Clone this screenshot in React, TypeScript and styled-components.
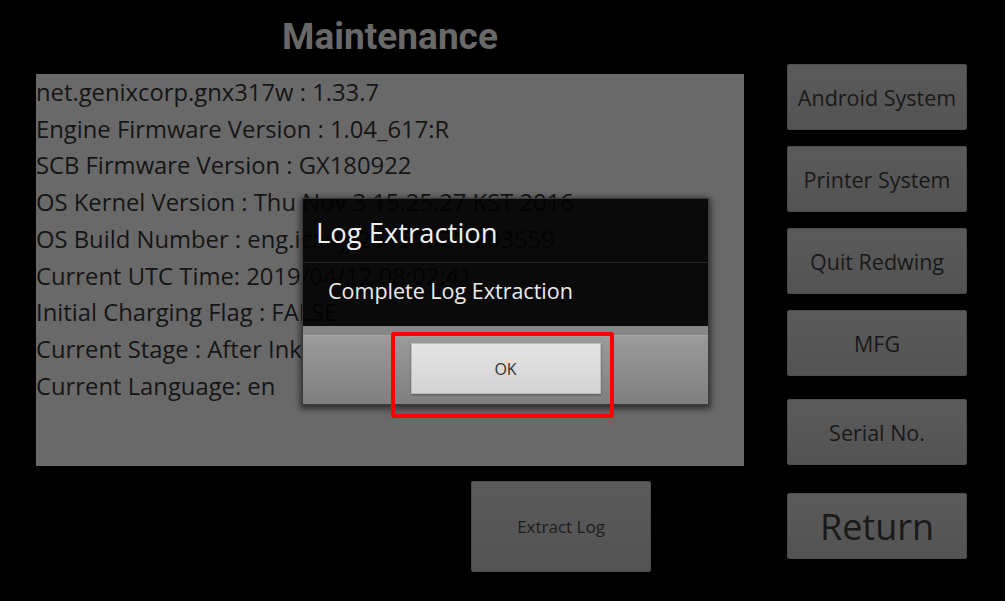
import styled, { createGlobalStyle } from "styled-components";

const GlobalStyle = createGlobalStyle`
  html, body {
    margin: 0;
    padding: 0;
    background: #000;
  }
  * {
    box-sizing: border-box;
  }
`;

const infoLines = [
  "net.genixcorp.gnx317w : 1.33.7",
  "Engine Firmware Version : 1.04_617:R",
  "SCB Firmware Version : GX180922",
  "OS Kernel Version : Thu Nov 3 15:25:27 KST 2016",
  "OS Build Number : eng.icanjj.20161021.203559",
  "Current UTC Time: 2019/04/12 08:02:41",
  "Initial Charging Flag : FALSE",
  "Current Stage : After Ink Charging",
  "Current Language: en",
];

const menuButtons = [
  { label: "Android System", gap: 0 },
  { label: "Printer System", gap: 16 },
  { label: "Quit Redwing", gap: 16 },
  { label: "MFG", gap: 16 },
  { label: "Serial No.", gap: 23 },
  { label: "Return", gap: 28, big: true },
];

export default function App() {
  return (
    <>
      <GlobalStyle />
      <Screen>
        <LeftColumn>
          <Title>Maintenance</Title>
          <InfoPanel>
            {infoLines.map((line) => (
              <InfoLine key={line}>{line}</InfoLine>
            ))}
          </InfoPanel>
          <ExtractButton>Extract Log</ExtractButton>
        </LeftColumn>
        <RightColumn>
          {menuButtons.map((b) => (
            <MenuButton key={b.label} $gap={b.gap} $big={b.big}>
              {b.label}
            </MenuButton>
          ))}
        </RightColumn>

        <Dialog>
          <DialogTitle>Log Extraction</DialogTitle>
          <DialogMessage>Complete Log Extraction</DialogMessage>
          <ButtonBar>
            <OkWrap>
              <OkButton>OK</OkButton>
              <Highlight />
            </OkWrap>
          </ButtonBar>
        </Dialog>
      </Screen>
    </>
  );
}

const Screen = styled.div`
  position: relative;
  width: 1005px;
  height: 601px;
  background: #000;
  display: flex;
  font-family: "Open Sans", Roboto, sans-serif;
  overflow: hidden;
`;

const LeftColumn = styled.div`
  width: 708px;
  margin-left: 36px;
  display: flex;
  flex-direction: column;
`;

const Title = styled.div`
  height: 74px;
  display: flex;
  align-items: center;
  justify-content: center;
  padding-bottom: 2px;
  font-family: Roboto, sans-serif;
  font-size: 37px;
  font-weight: 700;
  color: #696969;
`;

const InfoPanel = styled.div`
  height: 392px;
  background: #696969;
`;

const InfoLine = styled.div`
  font-size: 23.8px;
  line-height: 36.7px;
  color: #151515;
  white-space: nowrap;
`;

const ExtractButton = styled.div`
  width: 180px;
  height: 91px;
  margin-top: 15px;
  margin-left: 435px;
  background: linear-gradient(#5a5a5a, #535353);
  border: 1px solid #4c4c4c;
  border-radius: 2px;
  display: flex;
  align-items: center;
  justify-content: center;
  font-size: 17px;
  color: #1c1c1c;
`;

const RightColumn = styled.div`
  margin-left: 43px;
  padding-top: 64px;
  display: flex;
  flex-direction: column;
`;

const MenuButton = styled.div<{ $gap: number; $big?: boolean }>`
  width: 180px;
  height: 66px;
  margin-top: ${(p) => p.$gap}px;
  background: linear-gradient(#5a5a5a, #535353);
  border: 1px solid #4c4c4c;
  border-radius: 2px;
  display: flex;
  align-items: center;
  justify-content: center;
  font-size: ${(p) => (p.$big ? 36 : 21.5)}px;
  color: #191919;
`;

const Dialog = styled.div`
  position: absolute;
  left: 302px;
  top: 198px;
  width: 407px;
  height: 207px;
  display: flex;
  flex-direction: column;
  background: rgba(0, 0, 0, 0.9);
  border: 1px solid #3a3a3a;
  box-shadow: 0 2px 6px 2px rgba(0, 0, 0, 0.55);
`;

const DialogTitle = styled.div`
  height: 64px;
  padding-left: 13px;
  padding-top: 4px;
  display: flex;
  align-items: center;
  font-size: 27.4px;
  color: #f0f0f0;
  border-bottom: 1px solid #252525;
`;

const DialogMessage = styled.div`
  height: 63px;
  padding-left: 25px;
  padding-bottom: 8px;
  display: flex;
  align-items: center;
  font-size: 21.5px;
  color: #ececec;
`;

const ButtonBar = styled.div`
  flex: 1;
  display: flex;
  justify-content: center;
  padding-top: 17px;
  background: linear-gradient(
    to bottom,
    #868686 0px,
    #868686 9px,
    #a4a4a4 9px,
    #a4a4a4 10px,
    #9a9a9a 11px,
    #7f7f7f 100%
  );
`;

const OkWrap = styled.div`
  position: relative;
  width: 190px;
  height: 51px;
`;

const OkButton = styled.div`
  width: 100%;
  height: 100%;
  background: linear-gradient(#e4e4e4, #d3d3d3);
  border: 1px solid #bcbcbc;
  box-shadow: 0 1px 2px rgba(0, 0, 0, 0.35);
  display: flex;
  align-items: center;
  justify-content: center;
  font-size: 16px;
  color: #333;
`;

const Highlight = styled.div`
  position: absolute;
  left: -20px;
  right: -13px;
  top: -11px;
  bottom: -24px;
  border: 4px solid #ff0000;
  border-radius: 3px;
  pointer-events: none;
`;
